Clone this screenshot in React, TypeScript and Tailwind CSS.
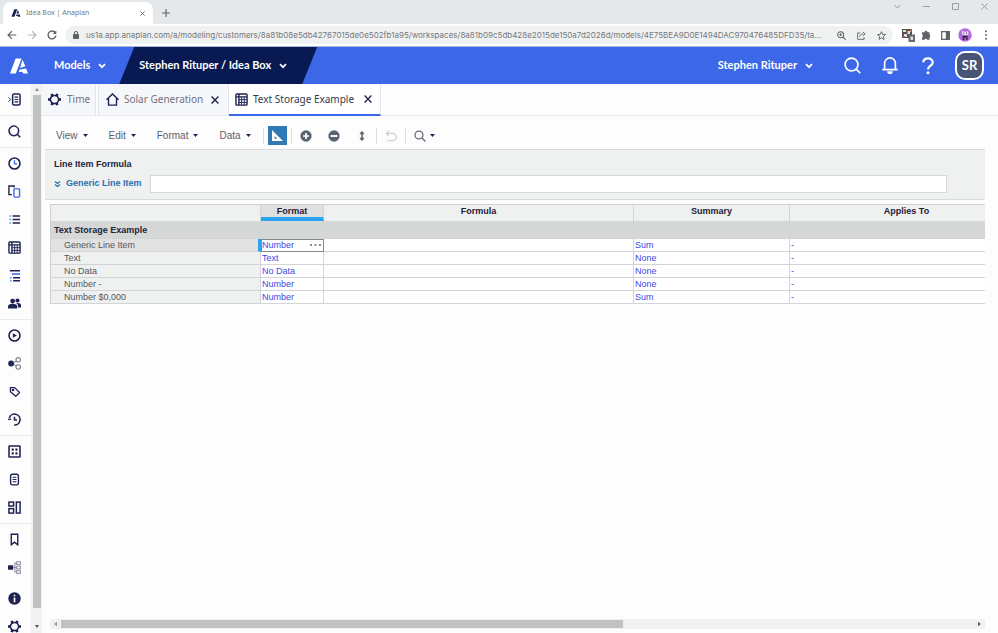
import { useState, type ReactNode } from 'react'
import clsx from 'clsx'

const URL_TEXT =
  'us1a.app.anaplan.com/a/modeling/customers/8a81b08e5db42767015de0e502fb1a95/workspaces/8a81b09c5db428e2015de150a7d2026d/models/4E75BEA9D0E1494DAC970476485DFD35/ta...'

type LineItem = { name: string; format: string; summary: string }

const lineItems: LineItem[] = [
  { name: 'Generic Line Item', format: 'Number', summary: 'Sum' },
  { name: 'Text', format: 'Text', summary: 'None' },
  { name: 'No Data', format: 'No Data', summary: 'None' },
  { name: 'Number -', format: 'Number', summary: 'None' },
  { name: 'Number $0,000', format: 'Number', summary: 'Sum' },
]

type IconProps = { size?: number; width?: number; className?: string; children: ReactNode }

function Icon({ size = 13, width = 1.5, className, children }: IconProps) {
  return (
    <svg
      width={size}
      height={size}
      viewBox="0 0 14 14"
      fill="none"
      stroke="currentColor"
      strokeWidth={width}
      className={clsx('shrink-0', className)}
      aria-hidden="true"
    >
      {children}
    </svg>
  )
}

function Logo({ className }: { className?: string }) {
  return (
    <svg viewBox="0 0 18 16" fill="currentColor" className={className} aria-hidden="true">
      <path d="M5.6 0.5h6L5.8 15.5H0z" />
      <path d="M12.5 1.8l2.9 6.4-5.4 1.7z" />
      <path d="M9.2 11.7l6.9-1.2 1.9 5h-4.6l-1.2-1.8-3.2.3z" />
    </svg>
  )
}

function Chevron() {
  return (
    <svg width="8" height="6" viewBox="0 0 8 6" fill="none" stroke="currentColor" strokeWidth="1.7" aria-hidden="true">
      <path d="M1 1.2l3 3 3-3" />
    </svg>
  )
}

function Caret() {
  return (
    <svg width="5" height="3" viewBox="0 0 5 3" fill="#1e2250" aria-hidden="true">
      <path d="M0 0h5L2.5 3z" />
    </svg>
  )
}

function CloseIcon({ size = 8, width = 2.4 }: { size?: number; width?: number }) {
  return (
    <Icon size={size} width={width}>
      <path d="M1 1l12 12M13 1L1 13" />
    </Icon>
  )
}

function GearIcon() {
  return (
    <Icon width={1.7}>
      <circle cx="7" cy="7" r="4.4" />
      <path
        d="M4.8 3.4L4 1M9.2 3.4L10 1M4.8 10.6L4 13M9.2 10.6l.8 2.4M2.8 7H0M11.2 7H14"
        strokeWidth="2.8"
      />
    </Icon>
  )
}

function GridIcon() {
  return (
    <Icon width={1.5}>
      <rect x="1" y="1" width="12" height="12" rx="1" />
      <path d="M1 4.2h12M4.2 1v12" />
      <path d="M7.2 4.2V13M10 4.2V13M4.2 7.2H13M4.2 10.1H13" strokeWidth="1" />
    </Icon>
  )
}

const sidebarGroups: { label: string; icon: ReactNode }[][] = [
  [
    {
      label: 'Expand navigation',
      icon: (
        <Icon width={1.3}>
          <path d="M.6 4.6L2.8 7 .6 9.4" strokeWidth="1" />
          <rect x="5" y="1.2" width="8" height="11.6" rx="1.6" strokeWidth="1.6" />
          <path d="M7 4.4h4M7 7h4M7 9.6h4" />
        </Icon>
      ),
    },
  ],
  [
    {
      label: 'Search',
      icon: (
        <Icon width={1.7}>
          <circle cx="6.3" cy="6.3" r="5.2" />
          <path d="M10 10l3.2 3.2" />
        </Icon>
      ),
    },
  ],
  [
    {
      label: 'Time',
      icon: (
        <Icon width={1.7}>
          <circle cx="7" cy="7" r="5.9" />
          <path d="M7 3.6v3.8h2.8" stroke="#3d67e9" strokeWidth="1.4" />
        </Icon>
      ),
    },
    {
      label: 'Versions',
      icon: (
        <Icon width={1.5}>
          <path d="M6.6 2.8V1H1v9.4h3.2" />
          <rect x="6.4" y="4.2" width="6" height="8.8" rx=".8" stroke="#3d67e9" />
        </Icon>
      ),
    },
    {
      label: 'General lists',
      icon: (
        <Icon>
          <path d="M1.5 3.2h2M1.5 7h2M1.5 10.8h2" stroke="#64a5f0" />
          <path d="M5 3.2h8M5 7h8M5 10.8h8" />
        </Icon>
      ),
    },
    { label: 'Modules', icon: <GridIcon /> },
    {
      label: 'Line item subsets',
      icon: (
        <Icon width={1.7}>
          <path d="M2 1.8h11M5.5 9.4H13M5.5 12.6H13" />
          <path d="M4 5.4h9" stroke="#3d67e9" />
          <path d="M2 9.4h2M2 12.6h2" stroke="#64a5f0" />
        </Icon>
      ),
    },
    {
      label: 'Users',
      icon: (
        <Icon width={0}>
          <g fill="currentColor">
            <circle cx="5" cy="4.4" r="2.6" />
            <circle cx="10.2" cy="3.7" r="2.2" />
            <path d="M0 12.4V10c0-1.6 1.8-2.6 5-2.6s4.9 1 4.9 2.6v2.4z" />
            <path d="M10.8 11.2H14V8.9c0-1.5-1.4-2.4-3.8-2.4-.5 0-1 .1-1.4.2 1.4.7 2 1.7 2 3z" />
          </g>
        </Icon>
      ),
    },
  ],
  [
    {
      label: 'Processes',
      icon: (
        <Icon width={1.7}>
          <circle cx="7" cy="7" r="5.9" />
          <path d="M5.2 4.6v4.8L9.6 7z" fill="currentColor" stroke="none" />
        </Icon>
      ),
    },
    {
      label: 'Connections',
      icon: (
        <Icon width={1.1}>
          <circle cx="3.4" cy="7" r="3.2" fill="currentColor" stroke="none" />
          <g stroke="#777b86">
            <path d="M6 6l2.8-1.6M6 8l2.8 1.6" />
            <circle cx="11" cy="3" r="2.4" />
            <circle cx="11" cy="10.8" r="2.4" />
          </g>
        </Icon>
      ),
    },
    {
      label: 'Tags',
      icon: (
        <Icon width={1.4}>
          <path d="M2.6 2.8h4.6L12.4 8l-4 4.2-5.8-5z" strokeLinejoin="round" />
          <circle cx="5.4" cy="5.4" r=".7" />
        </Icon>
      ),
    },
    {
      label: 'History',
      icon: (
        <Icon width={1.7}>
          <path d="M1.4 5.4A5.9 5.9 0 1 1 6.6 12.9" />
          <path d="M0 6.8h3.4" strokeWidth="1.4" />
          <path d="M7 4v3.5h2.8" />
        </Icon>
      ),
    },
  ],
  [
    {
      label: 'Dashboards',
      icon: (
        <Icon width={1.7}>
          <rect x="1.1" y="1.1" width="11.8" height="11.8" rx=".6" />
          <path d="M4 5h2.2M8 5h2.2M4 9h2.2M8 9h2.2" strokeWidth="2.2" />
        </Icon>
      ),
    },
    {
      label: 'Pages',
      icon: (
        <Icon width={1.5}>
          <rect x="2.8" y="1.4" width="8.4" height="11.4" rx="1.8" />
          <path d="M5 4.6h4M5 7h4M5 9.4h4" strokeWidth="1.1" />
        </Icon>
      ),
    },
    {
      label: 'Layouts',
      icon: (
        <Icon width={1.6}>
          <rect x="1" y="1.2" width="5" height="4.2" />
          <rect x="1" y="8.2" width="5" height="4.8" />
          <rect x="9" y="1.2" width="4" height="11.8" />
        </Icon>
      ),
    },
  ],
  [
    {
      label: 'Bookmarks',
      icon: (
        <Icon>
          <path d="M3.5 1.4h7v11.3L7 9.8l-3.5 2.9z" />
        </Icon>
      ),
    },
    {
      label: 'Model map',
      icon: (
        <Icon width={1.1}>
          <rect y="4.6" width="5.6" height="4.8" rx=".6" fill="currentColor" stroke="none" />
          <g stroke="#8b8f99">
            <path d="M5.6 7h3.6M9 2.2H7.4v9.6H9" />
            <rect x="9.3" y=".8" width="4" height="2.9" />
            <rect x="9.3" y="5.6" width="4" height="2.9" />
            <rect x="9.3" y="10.4" width="4" height="2.9" />
          </g>
        </Icon>
      ),
    },
  ],
  [
    {
      label: 'Information',
      icon: (
        <Icon width={1.8}>
          <circle cx="7" cy="7" r="6.7" fill="currentColor" stroke="none" />
          <path d="M7 3v1.7M7 5.8V11" stroke="#fff" />
        </Icon>
      ),
    },
    { label: 'Settings', icon: <GearIcon /> },
  ],
]

function BrowserChrome() {
  return (
    <div className="shrink-0 border-b border-[#a9b4dc] bg-white text-[#5f6368]">
      <div className="flex h-6 items-end justify-between bg-[#e5e8eb]">
        <div className="flex h-full items-end">
          <div className="ml-[3px] flex h-[22px] w-[150px] items-center rounded-t-lg bg-white pr-2 pl-2">
            <Logo className="h-2 w-2.5 text-[#16204f]" />
            <span className="ml-[5px] flex-1 font-['Noto_Sans',sans-serif] text-[7px] text-[#74777c]">
              Idea Box | Anaplan
            </span>
            <button aria-label="Close tab">
              <CloseIcon size={5} />
            </button>
          </div>
          <button aria-label="New tab" className="mb-[7px] ml-[9px]">
            <Icon size={8} width={2}>
              <path d="M7 0v14M0 7h14" />
            </Icon>
          </button>
        </div>
        <div className="mr-[10px] flex h-full items-start gap-[22px] pt-[3px] text-[#9a9da1]">
          <button aria-label="Search tabs">
            <Icon size={7} width={2}>
              <path d="M1 4l6 6 6-6" />
            </Icon>
          </button>
          <button aria-label="Minimize">
            <Icon size={7} width={2}>
              <path d="M0 7h14" />
            </Icon>
          </button>
          <button aria-label="Maximize">
            <Icon size={7} width={2}>
              <path d="M1 1h12v12H1z" />
            </Icon>
          </button>
          <button aria-label="Close window">
            <CloseIcon size={7} width={2} />
          </button>
        </div>
      </div>
      <div className="flex h-[22px] items-center pr-[10px] pl-[7px]">
        <div className="flex items-center gap-[10px]">
          <button aria-label="Back">
            <Icon size={10} width={1.7}>
              <path d="M13 7H2M7 1.5L1.5 7 7 12.5" />
            </Icon>
          </button>
          <button aria-label="Forward" className="text-[#b4b7ba]">
            <Icon size={10} width={1.7}>
              <path d="M1 7h11M7 1.5L12.5 7 7 12.5" />
            </Icon>
          </button>
          <button aria-label="Reload">
            <Icon size={10} width={1.9}>
              <path d="M11.6 3.8A5.5 5.5 0 1 0 12.5 8" />
              <path d="M13 .6v5H8z" fill="currentColor" stroke="none" />
            </Icon>
          </button>
        </div>
        <div className="ml-2 flex h-[18px] flex-1 items-center rounded-full bg-[#f0f2f2] pr-[7px] pl-2">
          <svg width="6" height="8" viewBox="0 0 6 8" className="shrink-0" aria-hidden="true">
            <rect y="3" width="6" height="5" rx=".8" fill="currentColor" />
            <path d="M1.4 3.2V2a1.6 1.6 0 0 1 3.2 0v1.2" fill="none" stroke="currentColor" />
          </svg>
          <input
            aria-label="Address"
            defaultValue={URL_TEXT}
            className="ml-[7px] min-w-0 flex-1 bg-transparent font-['Inter',sans-serif] text-[8px] text-[#74777c] outline-none"
          />
          <div className="ml-1 flex items-center gap-[11px]">
            <button aria-label="Zoom">
              <Icon size={9} width={1.6}>
                <circle cx="5.7" cy="5.7" r="4.7" />
                <path d="M9 9l4.5 4.5M5.7 3.5v4.4M3.5 5.7h4.4" />
              </Icon>
            </button>
            <button aria-label="Share">
              <Icon size={9} width={1.4}>
                <path d="M5 3H1v10h10V9.5M4 9c.3-3 2.5-4.5 6-4.5M9 1.5l3.8 3.1L9 7.7" />
              </Icon>
            </button>
            <button aria-label="Bookmark this tab">
              <Icon size={9} width={1.5}>
                <path d="M7 1l1.8 4.2 4.4.4-3.3 3 1 4.4L7 10.6 3.1 13l1-4.400-3.300-3 4.400-.4z" />
              </Icon>
            </button>
          </div>
        </div>
        <div className="ml-2 flex items-center gap-2">
          <button aria-label="Extension">
            <svg width="14" height="14" viewBox="0 0 14 14" aria-hidden="true">
              <rect x="1" y="1" width="10" height="9" fill="#55504f" />
              <path d="M2 2h3v2H2zM6.5 3H9v3H6.5zM3 6h3v3H3z" fill="#e9dfdb" />
              <path d="M2 8h2v1H2zM9 1.5h1.5V4H9z" fill="#c57a5b" />
              <rect x="7.5" y="6.5" width="6.5" height="7.5" fill="#676b70" />
              <path d="M9.5 8.5H12V12H9.5z" fill="#dfdfe0" />
            </svg>
          </button>
          <button aria-label="Extensions" className="-ml-0.5">
            <Icon size={10} width={0}>
              <path
                d="M5 3a2 2 0 0 1 4 0h3v3.5a2 2 0 0 1 0 3.5v3.5H8.6a1.9 1.9 0 0 0-3.6 0H1.5V10a2 2 0 0 0 0-3.6V3z"
                fill="currentColor"
              />
            </Icon>
          </button>
          <button aria-label="Side panel" className="ml-0.5">
            <Icon size={9} width={2}>
              <path d="M1 1h12v12H1z" />
              <path d="M8.5 1H13v12H8.5z" fill="currentColor" />
            </Icon>
          </button>
          <button aria-label="Profile">
            <svg width="14" height="14" viewBox="0 0 14 14" aria-hidden="true">
              <circle cx="7" cy="7" r="6.7" fill="#b369e6" />
              <path d="M4 2.5l2 1.3h2.4l1.8-1 .4 3.4L9 7.8H5.6L3.9 6z" fill="#eadcf0" />
              <path d="M4.6 7.5h5V12H8.2V9.5H6.4V12H4.6z" fill="#3a2347" />
              <path d="M5.3 5.2h1M8 5.2h1" stroke="#3a2347" />
            </svg>
          </button>
          <button aria-label="Menu" className="ml-1">
            <svg width="4" height="10" viewBox="0 0 4 10" fill="currentColor" aria-hidden="true">
              <circle cx="2" cy="1.3" r="1" />
              <circle cx="2" cy="5" r="1" />
              <circle cx="2" cy="8.7" r="1" />
            </svg>
          </button>
        </div>
      </div>
    </div>
  )
}

function AppHeader() {
  return (
    <header className="flex h-[37px] shrink-0 items-center bg-[#3d67e9] pr-[14px] pl-[10px] font-['Lato',sans-serif] text-[11px] font-bold text-white">
      <Logo className="h-4 w-[18px]" />
      <button className="ml-[26px] flex items-center gap-2">
        Models
        <Chevron />
      </button>
      <button className="ml-[13px] flex h-full w-[198px] items-center gap-2 bg-[#081a51] pl-5 whitespace-nowrap [clip-path:polygon(15px_0,100%_0,calc(100%_-_15px)_100%,0_100%)]">
        Stephen Rituper / Idea Box
        <Chevron />
      </button>
      <div className="ml-auto flex items-center">
        <button className="flex items-center gap-2">
          Stephen Rituper
          <Chevron />
        </button>
        <button aria-label="Search" className="ml-[31px]">
          <Icon size={17} width={1.4}>
            <circle cx="6.2" cy="6.2" r="5.3" />
            <path d="M10 10l3.4 3.4" />
          </Icon>
        </button>
        <button aria-label="Notifications" className="ml-5">
          <Icon size={18} width={1.3}>
            <path d="M2.8 9.8V4.9a4.2 4.2 0 0 1 8.4 0v4.9M1 9.8h12" />
            <path d="M4.8 11a2.2 2.2 0 0 0 4.4 0z" fill="currentColor" stroke="none" />
          </Icon>
        </button>
        <button aria-label="Help" className="ml-5">
          <Icon size={18} width={1.7}>
            <path d="M3.3 4.2C3.5 2.2 5 1.1 7 1.1s3.7 1.2 3.7 3.1C10.7 6.7 7 6.7 7 9.7" />
            <circle cx="7" cy="12.2" r="1.2" fill="currentColor" stroke="none" />
          </Icon>
        </button>
        <button className="ml-[18px] h-[29px] w-[29px] rounded-[10px] border-2 border-white bg-[#475478] text-[13px]">
          SR
        </button>
      </div>
    </header>
  )
}

function Sidebar() {
  return (
    <nav className="w-[31px] shrink-0 overflow-hidden bg-[#fdfdfd]">
      {sidebarGroups.map((group, i) => (
        <div key={i} className="border-t border-[#e9ebf0] pt-px pb-0.5 first:border-t-0 last:border-t-0">
          {group.map((item) => (
            <button
              key={item.label}
              aria-label={item.label}
              className="flex h-7 w-full items-center pl-2 text-[#1e2250]"
            >
              {item.icon}
            </button>
          ))}
        </div>
      ))}
    </nav>
  )
}

function VerticalScrollbar() {
  return (
    <div className="flex w-[11px] shrink-0 flex-col items-center bg-[#f1f2f2]">
      <div className="flex h-[11px] shrink-0 items-center">
        <svg width="4" height="3" viewBox="0 0 4 3" fill="#8a8c8e" aria-hidden="true">
          <path d="M0 3h4L2 0z" />
        </svg>
      </div>
      <div className="w-2 flex-1 bg-[#c0c1c1]" />
      <div className="flex h-[25px] shrink-0 items-center pt-3">
        <svg width="4" height="3" viewBox="0 0 4 3" fill="#505254" aria-hidden="true">
          <path d="M0 0h4L2 3z" />
        </svg>
      </div>
    </div>
  )
}

function TabBar() {
  return (
    <div className="flex h-8 shrink-0 border-b border-[#e9ebf2] font-['Noto_Sans',sans-serif] text-[10px] text-[#6f7280]">
      <button className="mr-0.5 flex w-[54px] items-center gap-[6px] border-r border-[#e3e5ee] bg-[#f6f7fb] pl-[6px]">
        <span className="text-[#1e2250]">
          <GearIcon />
        </span>
        Time
      </button>
      <div className="flex w-[131px] items-center border-x border-[#e3e5ee] bg-[#f6f7fb] pl-[7px]">
        <Icon className="text-[#1e2250]">
          <path d="M2.7 6v7h8.6V6M.5 7.2L7 1l6.5 6.2" />
        </Icon>
        <button className="ml-[5px] whitespace-nowrap">Solar Generation</button>
        <button aria-label="Close Solar Generation" className="mr-[9px] ml-auto text-[#1e2250]">
          <CloseIcon />
        </button>
      </div>
      <div className="-mb-px flex w-[152px] items-center border-r border-b-2 border-r-[#e3e5ee] border-b-[#3d67e9] bg-white pl-[6px]">
        <span className="text-[#1e2250]">
          <GridIcon />
        </span>
        <button className="ml-[5px] whitespace-nowrap text-[#33374c]">Text Storage Example</button>
        <button aria-label="Close Text Storage Example" className="mr-2 ml-auto text-[#1e2250]">
          <CloseIcon />
        </button>
      </div>
    </div>
  )
}

function Toolbar() {
  return (
    <div className="flex h-[33px] shrink-0 items-center pt-[6px] pl-[14px] text-[10px] text-[#5d6068]">
      <div className="flex items-center gap-[21px]">
        {['View', 'Edit', 'Format', 'Data'].map((label) => (
          <button key={label} className="flex items-center gap-[5px]">
            {label}
            <Caret />
          </button>
        ))}
      </div>
      <div className="ml-3 flex items-center text-[#5b6275]">
        <span className="h-4 w-px bg-[#dcdde0]" />
        <button aria-label="Blueprint" className="ml-1 flex h-[19px] w-[19px] items-center justify-center bg-[#2f7ab5]">
          <svg width="11" height="11" viewBox="0 0 11 11" fill="#fff" fillRule="evenodd" aria-hidden="true">
            <path d="M0 0l11 11H0zM2.5 6v2.7h2.8z" />
          </svg>
        </button>
        <span className="ml-1 h-4 w-px bg-[#dcdde0]" />
        <button aria-label="Insert" className="ml-2">
          <Icon size={12} width={2}>
            <circle cx="7" cy="7" r="6.6" fill="currentColor" stroke="none" />
            <path d="M7 3.5v7M3.5 7h7" stroke="#fff" />
          </Icon>
        </button>
        <button aria-label="Delete" className="ml-4">
          <Icon size={12} width={2.2}>
            <circle cx="7" cy="7" r="6.6" fill="currentColor" stroke="none" />
            <path d="M3 7h8" stroke="#fff" />
          </Icon>
        </button>
        <button aria-label="Reorder" className="ml-4">
          <Icon size={12} width={1.8}>
            <path d="M7 3v8" />
            <path d="M7 1l3 4H4zM7 13l3-4H4z" fill="currentColor" stroke="none" />
          </Icon>
        </button>
        <span className="mx-2 h-4 w-px bg-[#dcdde0]" />
        <button aria-label="Undo" className="text-[#cfd1d4]">
          <Icon size={12} width={1.5}>
            <path d="M4.5 1l-3 3 3 3M1.5 4H9a4 4 0 0 1 0 8.5H2.5" />
          </Icon>
        </button>
        <span className="mx-2 h-4 w-px bg-[#dcdde0]" />
        <button aria-label="Find" className="flex items-center gap-1">
          <Icon size={12} width={1.4}>
            <circle cx="5.8" cy="5.8" r="4.6" />
            <path d="M9.3 9.3l4.2 4.2" />
          </Icon>
          <Caret />
        </button>
      </div>
    </div>
  )
}

function FormulaBar() {
  return (
    <div className="mr-[13px] ml-[3px] h-[51px] shrink-0 border-y border-[#d9dadb] bg-[#eff1f1] pt-2 pr-[38px] pl-[9px] text-[9px] font-bold">
      <div className="leading-3 text-[#22243a]">Line Item Formula</div>
      <div className="mt-[5px] flex items-center">
        <Icon size={7} width={2.6} className="text-[#2573b5]">
          <path d="M2 1l5 4 5-4M2 7l5 4 5-4" />
        </Icon>
        <label htmlFor="formula" className="ml-[5px] whitespace-nowrap text-[#2a6fb0]">
          Generic Line Item
        </label>
        <input
          id="formula"
          className="ml-2 h-[18px] min-w-0 flex-1 border border-[#d6d7d8] bg-white px-1 font-normal outline-none"
        />
      </div>
    </div>
  )
}

function LineItemTable() {
  const [selected, setSelected] = useState(0)

  return (
    <div className="mt-1 mr-[13px] ml-2 overflow-hidden">
      <table className="w-[calc(100%+39px)] table-fixed border-separate border-spacing-0 border-t border-l border-[#cfd0d2] text-left text-[9px] leading-3 text-[#55565c] [&_td]:border-r [&_td]:border-b [&_td]:border-[#d3d4d6] [&_th]:border-r [&_th]:border-[#d3d4d6]">
        <colgroup>
          <col className="w-[210px]" />
          <col className="w-[63px]" />
          <col className="w-[310px]" />
          <col className="w-[156px]" />
          <col />
        </colgroup>
        <thead>
          <tr className="h-4 bg-[#eff1f1] text-center align-top text-[#1e2035]">
            <th aria-label="Line item" />
            <th className="border-b-4 border-b-[#2ba3ef]! bg-[#dfdfe0]">Format</th>
            <th>Formula</th>
            <th>Summary</th>
            <th>Applies To</th>
          </tr>
        </thead>
        <tbody>
          <tr className="h-[18px] bg-[#d6d7d7] text-[#22243a]">
            <th className="border-b pl-[3px]">Text Storage Example</th>
            <td />
            <td />
            <td />
            <td />
          </tr>
          {lineItems.map((item, i) => (
            <tr key={item.name} onClick={() => setSelected(i)} className="h-[13px] bg-white text-[#4046ea]">
              <th
                className={clsx(
                  'border-b pl-[13px] font-normal text-[#55565c]',
                  i === selected ? 'border-r-3! border-r-[#2ba3ef]! bg-[#e2e2e2]' : 'bg-[#eff1f1]',
                )}
              >
                {item.name}
              </th>
              <td className={clsx('pl-px', i === selected && 'outline -outline-offset-1 outline-[#85878c]')}>
                <div className="flex items-center justify-between">
                  {item.format}
                  {i === selected && (
                    <button aria-label="Edit format" className="mr-0.5">
                      <svg width="11" height="2" viewBox="0 0 11 2" fill="#8d8f93" aria-hidden="true">
                        <path d="M0 0h2v2H0zM4.5 0h2v2h-2zM9 0h2v2H9z" />
                      </svg>
                    </button>
                  )}
                </div>
              </td>
              <td />
              <td className="pl-px">{item.summary}</td>
              <td className="pl-px">-</td>
            </tr>
          ))}
        </tbody>
      </table>
    </div>
  )
}

function HorizontalScrollbar() {
  return (
    <div className="mt-auto mr-[13px] mb-1 ml-2 flex h-[10px] shrink-0 items-center bg-[#f0f2f2]">
      <div className="flex w-[11px] justify-center">
        <svg width="3" height="4" viewBox="0 0 3 4" fill="#8a8c8e" aria-hidden="true">
          <path d="M3 0v4L0 2z" />
        </svg>
      </div>
      <div className="flex-1">
        <div className="h-2 w-8/13 bg-[#c0c1c1]" />
      </div>
      <div className="flex w-[11px] justify-center">
        <svg width="3" height="4" viewBox="0 0 3 4" fill="#505254" aria-hidden="true">
          <path d="M0 0v4l3-2z" />
        </svg>
      </div>
    </div>
  )
}

export default function App() {
  return (
    <div className="flex h-screen flex-col overflow-hidden bg-[#fdfdfd] font-['Liberation_Sans',Arial,sans-serif]">
      <BrowserChrome />
      <AppHeader />
      <div className="flex min-h-0 flex-1">
        <Sidebar />
        <VerticalScrollbar />
        <main className="flex min-w-0 flex-1 flex-col">
          <TabBar />
          <Toolbar />
          <FormulaBar />
          <LineItemTable />
          <HorizontalScrollbar />
        </main>
      </div>
    </div>
  )
}
